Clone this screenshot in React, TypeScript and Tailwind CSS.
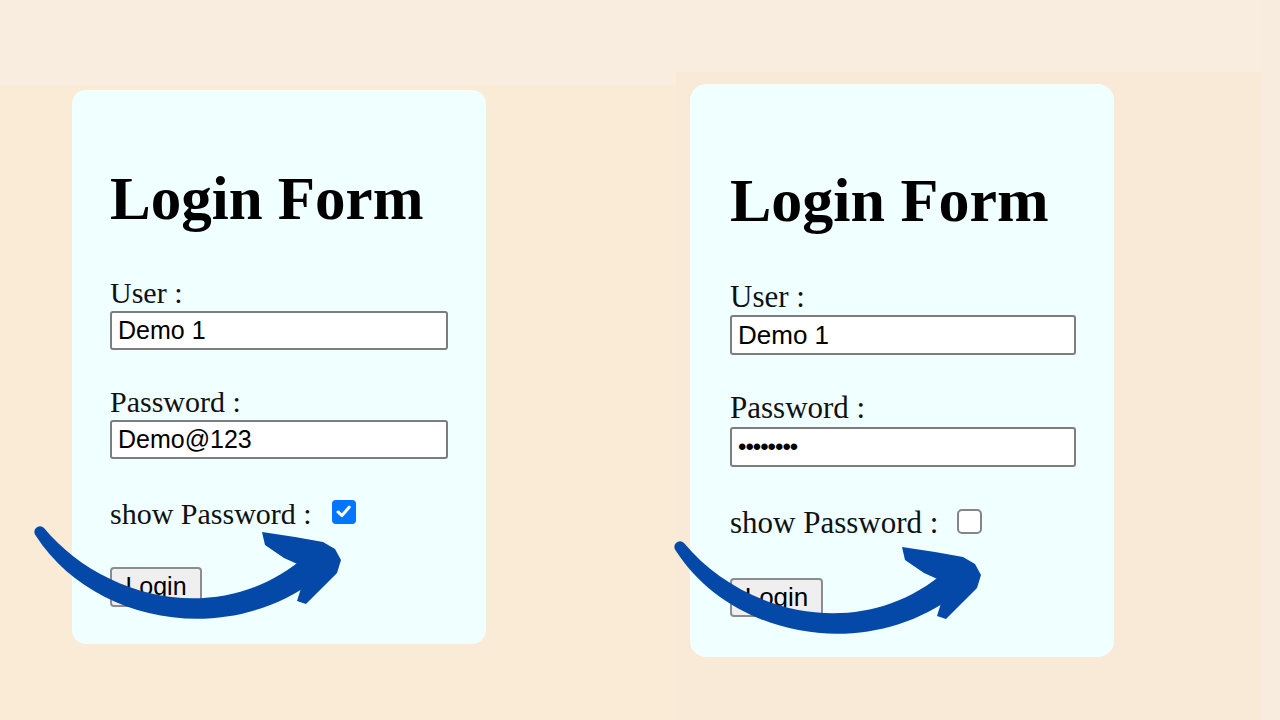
import React from "react";

const serif = "font-['Liberation_Serif','Times_New_Roman',serif]";
const sans = "font-['Liberation_Sans',Arial,sans-serif]";

function Arrow({ dx = 0, dy = 0 }: { dx?: number; dy?: number }) {
  return (
    <g transform={`translate(${dx} ${dy})`} fill="#0449a8">
      <path d="M684 543 C742 613 860 645 946 571 L957 594 C862 665 730 635 676 551 A 4.8 4.8 0 0 1 684 543 Z" />
      <polygon points="902,547 935,552 963,557 975,564 981,575 977,588 963,602 946,619 937,616 942,600 949,590 944,582 924,573 905,560" />
    </g>
  );
}

function Check({ checked, size }: { checked: boolean; size: number }) {
  if (checked) {
    return (
      <div
        className="flex items-center justify-center rounded-[4px] bg-[#0075ff]"
        style={{ width: size, height: size }}
      >
        <svg viewBox="0 0 24 24" className="h-[80%] w-[80%]">
          <path d="M5 12.5 L10 17 L19 6.5" fill="none" stroke="white" strokeWidth="3.8" strokeLinecap="round" strokeLinejoin="round" />
        </svg>
      </div>
    );
  }
  return (
    <div
      className="rounded-[5px] border-2 border-[#858585] bg-white"
      style={{ width: size, height: size }}
    />
  );
}

export default function App() {
  return (
    <div className="relative flex h-[720px] w-[1280px] items-start overflow-hidden bg-[#f9eddf]">
      {/* left screenshot */}
      <div className="mt-[85px] h-[635px] w-[676px] shrink-0 bg-[#faebd7] pl-[72px] pt-[5px]">
        <div className={`flex h-[554px] w-[414px] flex-col items-start rounded-[14px] bg-[#f0ffff] pl-[38px] pt-[74px] text-[#111] ${serif}`}>
          <h1 className="text-[61px] font-bold leading-[70px] text-black">Login Form</h1>
          <div className="mt-[42px] text-[30px] leading-[34px]">User :</div>
          <div className={`mt-[1px] flex h-[39px] w-[338px] items-center rounded-[3px] border-2 border-[#7d7d7d] bg-white pl-[6px] text-[25px] text-black ${sans}`}>
            Demo 1
          </div>
          <div className="mt-[35px] text-[30px] leading-[34px]">Password :</div>
          <div className={`mt-[1px] flex h-[39px] w-[338px] items-center rounded-[3px] border-2 border-[#7d7d7d] bg-white pl-[6px] text-[25px] text-black ${sans}`}>
            Demo@123
          </div>
          <div className="mt-[38px] flex h-[34px] items-start">
            <span className="text-[30px] leading-[34px]">show Password :</span>
            <div className="ml-[20px] mt-[3px]">
              <Check checked size={24} />
            </div>
          </div>
          <div className={`mt-[36px] flex h-[40px] w-[92px] items-center justify-center rounded-[4px] border-2 border-[#8c8c8c] bg-[#efefef] text-[25px] text-black ${sans}`}>
            Login
          </div>
        </div>
      </div>

      {/* right screenshot */}
      <div className="mt-[72px] h-[648px] w-[586px] shrink-0 bg-[#f9e9d7] pl-[14px] pt-[12px]">
        <div className={`flex h-[573px] w-[424px] flex-col items-start rounded-[16px] bg-[#f0ffff] pl-[40px] pt-[81px] text-[#111] ${serif}`}>
          <h1 className="text-[62px] font-bold leading-[71px] text-black">Login Form</h1>
          <div className="mt-[43px] text-[31px] leading-[35px]">User :</div>
          <div className={`mt-[1px] flex h-[40px] w-[346px] items-center rounded-[3px] border-2 border-[#7d7d7d] bg-white pl-[6px] text-[26px] text-black ${sans}`}>
            Demo 1
          </div>
          <div className="mt-[35px] text-[31px] leading-[35px]">Password :</div>
          <div className={`mt-[2px] flex h-[40px] w-[346px] items-center rounded-[3px] border-2 border-[#7d7d7d] bg-white pl-[6px] text-[24px] tracking-[-1px] text-black ${sans}`}>
            ••••••••
          </div>
          <div className="mt-[38px] flex h-[35px] items-start">
            <span className="text-[31px] leading-[35px]">show Password :</span>
            <div className="ml-[19px] mt-[4px]">
              <Check checked={false} size={25} />
            </div>
          </div>
          <div className={`mt-[38px] flex h-[39px] w-[93px] items-center justify-center rounded-[4px] border-2 border-[#8c8c8c] bg-[#efefef] text-[26px] text-black ${sans}`}>
            Login
          </div>
        </div>
      </div>
      <div className="h-[720px] flex-1 bg-[#f8ecdf]" />

      {/* hand-drawn arrows */}
      <svg
        className="pointer-events-none absolute left-0 top-0 h-[720px] w-[1280px]"
        viewBox="0 0 1280 720"
      >
        <Arrow dx={-640} dy={-15} />
        <Arrow />
      </svg>
    </div>
  );
}
